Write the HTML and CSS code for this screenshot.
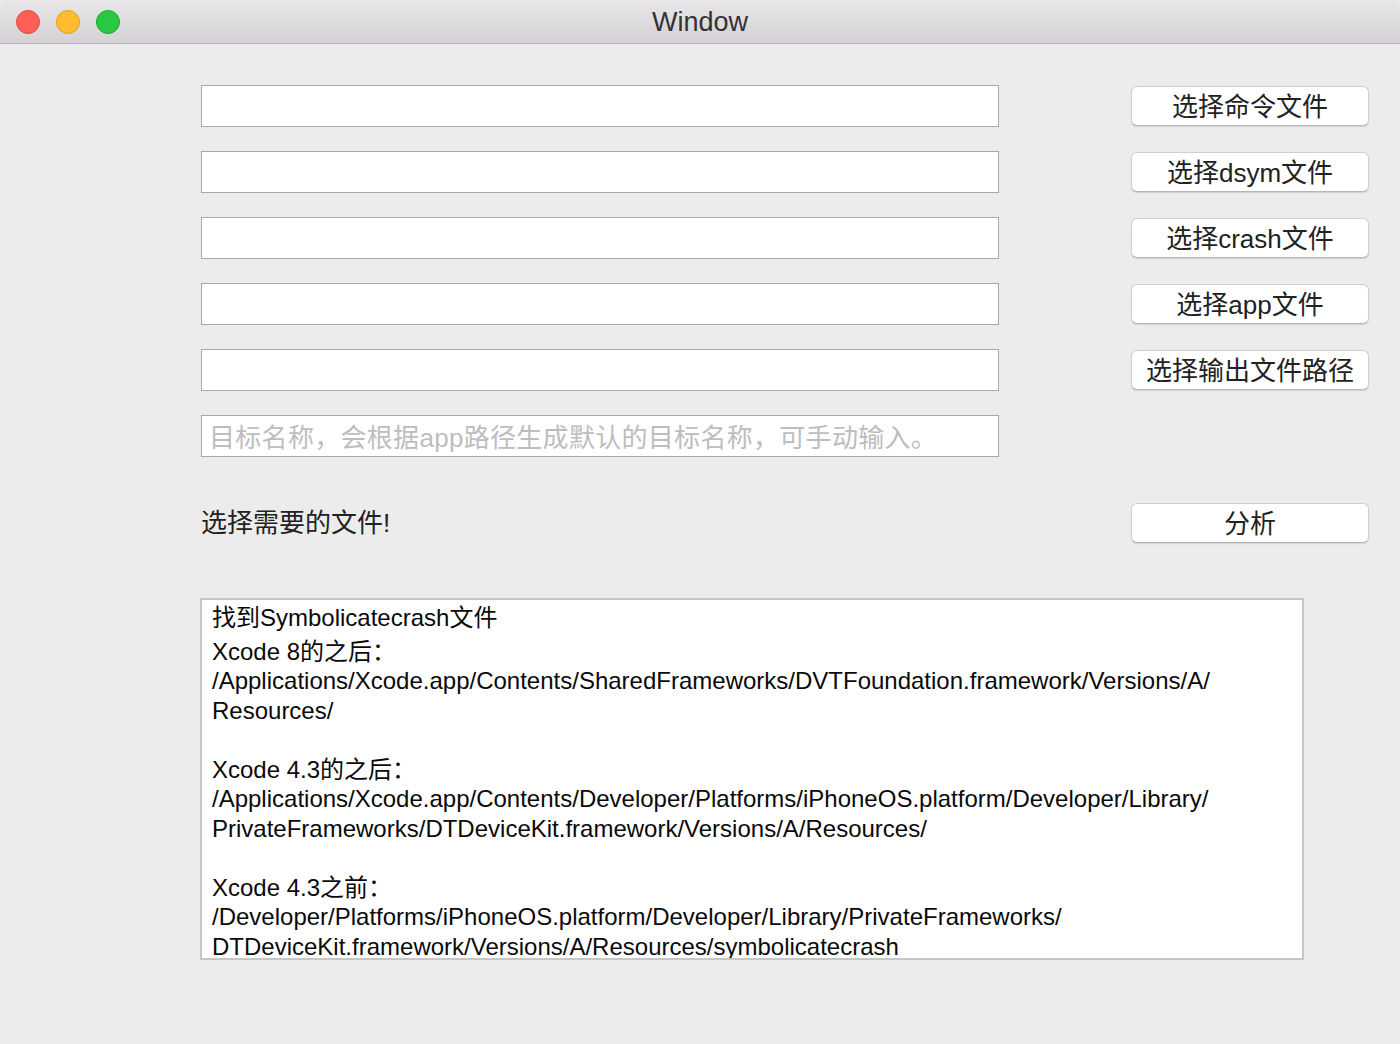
FILE: index.html
```html
<!DOCTYPE html>
<html lang="zh-CN">
<head>
<meta charset="utf-8">
<title>Window</title>
<link rel="stylesheet" href="styles.css">
</head>
<body>
<div class="window">
  <div class="titlebar">
    <div class="lights">
      <span class="light red"></span>
      <span class="light yellow"></span>
      <span class="light green"></span>
    </div>
    <div class="title">Window</div>
  </div>
  <div class="content">
    <div class="row">
      <div class="field"></div>
      <div class="btn">选择命令文件</div>
    </div>
    <div class="row">
      <div class="field"></div>
      <div class="btn">选择dsym文件</div>
    </div>
    <div class="row">
      <div class="field"></div>
      <div class="btn">选择crash文件</div>
    </div>
    <div class="row">
      <div class="field"></div>
      <div class="btn">选择app文件</div>
    </div>
    <div class="row">
      <div class="field"></div>
      <div class="btn">选择输出文件路径</div>
    </div>
    <div class="row">
      <div class="field placeholder">目标名称，会根据app路径生成默认的目标名称，可手动输入。</div>
    </div>
    <div class="row status-row">
      <div class="status">选择需要的文件!</div>
      <div class="btn">分析</div>
    </div>
    <div class="log">
      <div class="line first">找到Symbolicatecrash文件</div>
      <div class="line">Xcode 8的之后：</div>
      <div class="line">/Applications/Xcode.app/Contents/SharedFrameworks/DVTFoundation.framework/Versions/A/</div>
      <div class="line">Resources/</div>
      <div class="line blank"></div>
      <div class="line">Xcode 4.3的之后：</div>
      <div class="line">/Applications/Xcode.app/Contents/Developer/Platforms/iPhoneOS.platform/Developer/Library/</div>
      <div class="line">PrivateFrameworks/DTDeviceKit.framework/Versions/A/Resources/</div>
      <div class="line blank"></div>
      <div class="line">Xcode 4.3之前：</div>
      <div class="line">/Developer/Platforms/iPhoneOS.platform/Developer/Library/PrivateFrameworks/</div>
      <div class="line">DTDeviceKit.framework/Versions/A/Resources/symbolicatecrash</div>
    </div>
  </div>
</div>
</body>
</html>
```
FILE: styles.css
```css
html, body {
  margin: 0;
  padding: 0;
  background: #ececec;
}

body {
  font-family: "Liberation Sans", "Noto Sans CJK SC", sans-serif;
  color: #1a1a1a;
}

.window {
  width: 1400px;
  height: 1044px;
  background: #ececec;
  border-radius: 0 0 8px 8px;
  overflow: hidden;
  display: flex;
  flex-direction: column;
}

.titlebar {
  height: 43px;
  border-bottom: 1px solid #b3b1b3;
  background: linear-gradient(#e9e7e9, #d3d1d3);
  border-radius: 8px 8px 0 0;
  display: flex;
  align-items: center;
  justify-content: center;
  position: relative;
  flex-shrink: 0;
}

.lights {
  position: absolute;
  left: 16px;
  top: 10px;
  display: flex;
  gap: 16px;
}

.light {
  width: 22px;
  height: 22px;
  border-radius: 50%;
  border: 1px solid;
  display: block;
}

.red { background: #fe5f57; border-color: #e2463f; }
.yellow { background: #febc2e; border-color: #e1a116; }
.green { background: #28c840; border-color: #17a92b; }

.title {
  font-size: 27px;
  color: #333333;
  font-family: "Liberation Sans", "Noto Sans", sans-serif;
  margin-top: 2px;
}

.content {
  padding: 41px 0 0 201px;
  display: flex;
  flex-direction: column;
}

.row {
  display: flex;
  align-items: center;
  height: 42px;
  margin-bottom: 24px;
}

.field {
  width: 798px;
  height: 42px;
  box-sizing: border-box;
  border: 1px solid #aaaaaa;
  background: #ffffff;
  flex-shrink: 0;
}

.placeholder {
  color: #bdbdbd;
  font-size: 26px;
  letter-spacing: 0.3px;
  line-height: 44px;
  padding-left: 7px;
  white-space: nowrap;
  overflow: hidden;
}

.btn {
  width: 238px;
  height: 40px;
  box-sizing: border-box;
  margin-left: 132px;
  background: #ffffff;
  border-radius: 6px;
  border: 1px solid #cfcfcf;
  border-bottom-color: #b5b5b5;
  box-shadow: 0 1px 1px rgba(0, 0, 0, 0.12);
  display: flex;
  align-items: center;
  justify-content: center;
  font-size: 26px;
  line-height: 1;
  padding-top: 2px;
  color: #222222;
  flex-shrink: 0;
}

.status-row {
  margin-top: 22px;
  height: 40px;
  margin-bottom: 55px;
}

.status {
  width: 798px;
  font-size: 26px;
  line-height: 1;
  padding-bottom: 0;
  color: #222222;
  flex-shrink: 0;
}

.log {
  margin-left: -1px;
  width: 1104px;
  height: 362px;
  box-sizing: border-box;
  border: 2px solid #c6c6c6;
  background: #ffffff;
  padding: 3px 0 0 10px;
  font-size: 24px;
  color: #0a0a0a;
  overflow: hidden;
}

.line {
  height: 29.5px;
  line-height: 29.5px;
  white-space: nowrap;
}

.line.first {
  margin-bottom: 4px;
}
```
